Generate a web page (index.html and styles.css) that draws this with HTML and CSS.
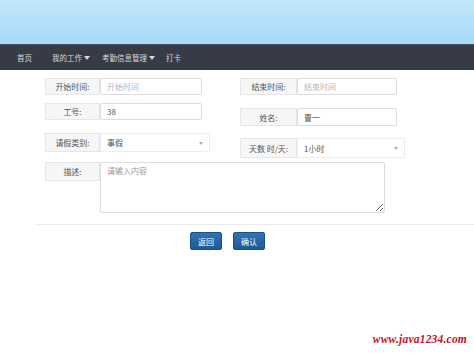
FILE: index.html
```html
<!DOCTYPE html>
<html lang="zh">
<head>
<meta charset="utf-8">
<link rel="stylesheet" href="styles.css">
</head>
<body>
<div class="banner"></div>
<nav class="nav">
  <span class="nav-item">首页</span>
  <span class="nav-item">我的工作<span class="caret"></span></span>
  <span class="nav-item">考勤信息管理<span class="caret"></span></span>
  <span class="nav-item">打卡</span>
</nav>
<main class="form">
  <div class="row r1">
    <div class="group left">
      <span class="label">开始时间:</span>
      <span class="input placeholder">开始时间</span>
    </div>
    <div class="group right">
      <span class="label">结束时间:</span>
      <span class="input placeholder">结束时间</span>
    </div>
  </div>
  <div class="row r2">
    <div class="group left">
      <span class="label">工号:</span>
      <span class="input">38</span>
    </div>
    <div class="group right shift">
      <span class="label tall">姓名:</span>
      <span class="input tall">曹一</span>
    </div>
  </div>
  <div class="row r3">
    <div class="group left">
      <span class="label sel">请假类别:</span>
      <span class="input select">事假<span class="arrow"></span></span>
    </div>
    <div class="group right shift">
      <span class="label sel">天数 时/天:</span>
      <span class="input select wide">1小时<span class="arrow"></span></span>
    </div>
  </div>
  <div class="row r4">
    <div class="group desc">
      <span class="label sel">描述:</span>
      <textarea class="area" placeholder="请输入内容"></textarea>
    </div>
  </div>
  <hr class="rule">
  <div class="actions">
    <button class="btn">返回</button>
    <button class="btn">确认</button>
  </div>
</main>
<div class="watermark">www.java1234.com</div>
</body>
</html>
```
FILE: styles.css
```css
* { box-sizing: border-box; }
body {
  margin: 0;
  width: 474px;
  height: 353px;
  background: #fff;
  font-family: "Noto Sans CJK SC", "Noto Sans", sans-serif;
  font-size: 8px;
  color: #555;
  position: relative;
  overflow: hidden;
}
.banner {
  height: 44px;
  background: linear-gradient(#c2e7fc, #a6d9f8);
}
.nav {
  height: 26px;
  background: #363b46;
  border-top: 1px solid #4a505c;
  display: flex;
  align-items: center;
  padding-left: 17px;
  color: #d6d8dc;
  font-size: 7.5px;
}
.nav-item { display: flex; align-items: center; }
.nav-item:nth-child(2) { margin-left: 20px; }
.nav-item:nth-child(3) { margin-left: 12px; }
.nav-item:nth-child(4) { margin-left: 11px; }
.caret {
  display: inline-block;
  width: 0; height: 0;
  border-left: 3.5px solid transparent;
  border-right: 3.5px solid transparent;
  border-top: 4px solid #d6d8dc;
  margin-left: 2px;
}
.form { padding-top: 8px; }
.row { display: flex; align-items: flex-start; }
.r2 { margin-top: 8px; }
.r3 { margin-top: 7px; }
.r4 { margin-top: 4px; }
.group { display: flex; align-items: stretch; }
.left { margin-left: 45px; width: 195px; }
.desc { margin-left: 45px; }
.shift { margin-top: 5px; }
.label {
  flex-shrink: 0;
  width: 55px;
  height: 17px;
  background: #f6f6f6;
  border: 1px solid #e6e6e6;
  display: flex;
  align-items: center;
  justify-content: center;
  color: #555;
}
.right .label { width: 57px; }
.input {
  flex-shrink: 0;
  width: 102px;
  height: 17px;
  border: 1px solid #dcdcdc;
  border-radius: 2px;
  display: flex;
  align-items: center;
  padding-left: 6px;
  color: #555;
  position: relative;
}
.right .input { width: 100px; }
.placeholder { color: #b5b5b5; }
.tall { height: 18px; }
.label.sel { height: 19px; }
.right .label.sel { height: 20px; }
.select {
  width: 110px;
  height: 19px;
  border-color: #ececec;
  border-radius: 0;
}
.right .select.wide { width: 108px; height: 20px; }
.arrow {
  position: absolute;
  right: 6px;
  top: 50%;
  margin-top: -1px;
  width: 0; height: 0;
  border-left: 2.5px solid transparent;
  border-right: 2.5px solid transparent;
  border-top: 3px solid #aaa;
}
.area {
  flex-shrink: 0;
  width: 285px;
  height: 51px;
  border: 1px solid #dcdcdc;
  border-radius: 2px;
  font-family: inherit;
  font-size: 8px;
  padding: 2px 6px;
  resize: both;
  margin: 0;
}
.area::placeholder { color: #999; }
.rule {
  margin: 11px 0 0 35px;
  border: 0;
  border-top: 1px solid #ececec;
}
.actions {
  display: flex;
  gap: 11px;
  margin-left: 190px;
  margin-top: 7px;
}
.btn {
  width: 32px;
  height: 18px;
  border: 1px solid #1d4f85;
  border-radius: 2px;
  background: linear-gradient(#2f74b6, #1f5a97);
  color: #fff;
  font-family: inherit;
  font-size: 8px;
  padding: 0;
}
.watermark {
  position: absolute;
  right: 7px;
  bottom: 8px;
  color: #c8101c;
  font-family: "Liberation Serif", serif;
  font-style: italic;
  font-weight: bold;
  font-size: 11.5px;
  letter-spacing: 0.2px;
}
```
